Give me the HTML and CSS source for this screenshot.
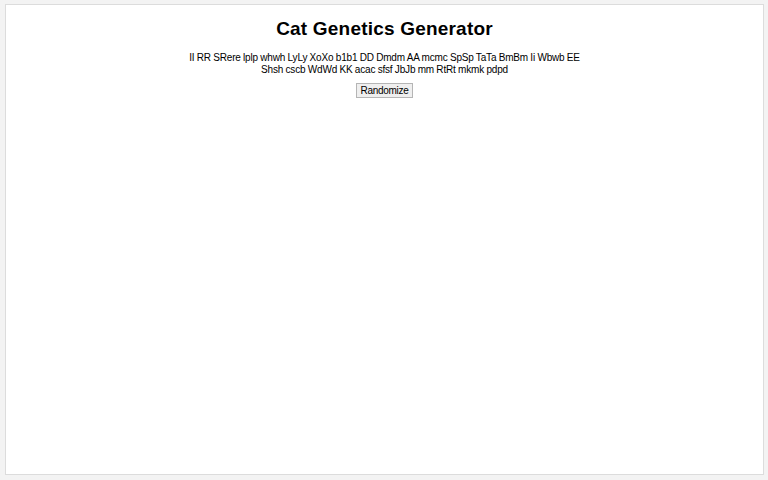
FILE: index.html
```
<!DOCTYPE html>
<html lang="en">
<head>
	<meta charset="UTF-8">
	<title>Cat Genetics Generator</title>
	<link rel="stylesheet" href="styles.css">
</head>
<body>
	<div id="page">
		<h1 class="title">Cat Genetics Generator</h1>
		<p id="genotype" class="genotype">II RR SRere lplp whwh LyLy XoXo b1b1 DD Dmdm AA mcmc SpSp TaTa BmBm Ii Wbwb EE Shsh cscb WdWd KK acac sfsf JbJb mm RtRt mkmk pdpd</p>
		<div class="controls">
			<button id="randomize" class="btn">Randomize</button>
		</div>
	</div>
</body>
</html>
```

FILE: styles.css
```
html, body {
	margin: 0;
	padding: 0;
	height: 100%;
}
body {
	background: #f3f3f3;
	font-family: "Liberation Sans", Arial, sans-serif;
	padding: 4px 4px 5px 5px;
	box-sizing: border-box;
}
#page {
	background: #fff;
	border: 1px solid #dcdcdc;
	height: 100%;
	box-sizing: border-box;
	text-align: center;
}
.title {
	font-size: 19px;
	font-weight: bold;
	letter-spacing: 0.2px;
	margin: 13px 0 0;
	line-height: 22px;
	color: #000;
}
.genotype {
	font-size: 10px;
	line-height: 12px;
	letter-spacing: -0.18px;
	word-spacing: -0.2px;
	margin: 12px auto 0;
	max-width: 400px;
	color: #000;
}
.controls {
	margin-top: 4px;
}
.btn {
	font-family: "Liberation Sans", Arial, sans-serif;
	font-size: 10px;
	letter-spacing: -0.3px;
	line-height: 11px;
	padding: 1px 4px;
	background: #efefef;
	border: 1px solid #b5b5b5;
	border-radius: 0;
	color: #000;
}
```
